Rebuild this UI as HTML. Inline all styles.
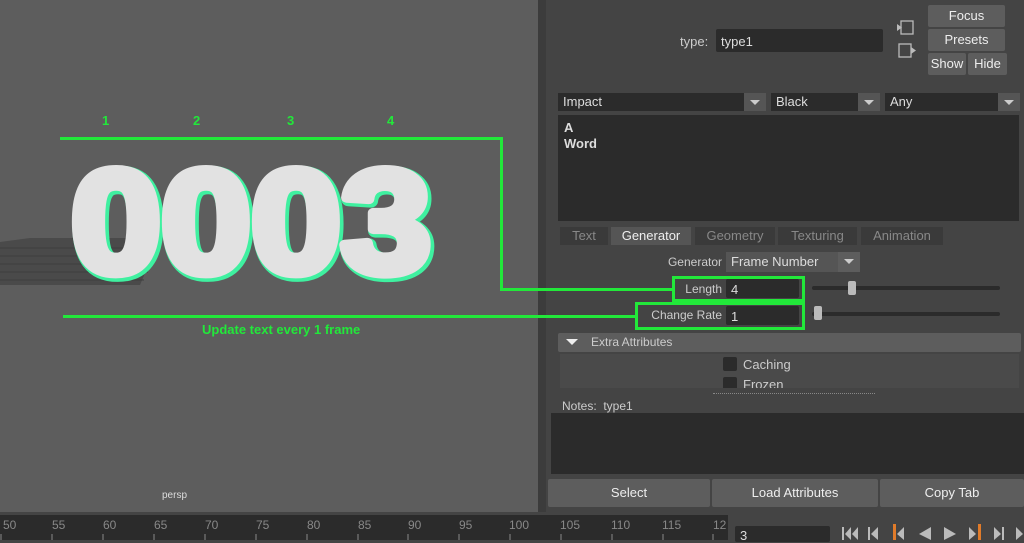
<!DOCTYPE html>
<html><head><meta charset="utf-8"><style>
*{margin:0;padding:0;box-sizing:border-box}
body{width:1024px;height:540px;overflow:hidden;background:#444;font-family:"Liberation Sans",sans-serif;font-size:12px;color:#ccc;position:relative}
.a{position:absolute}
.g{color:#22e83a;font-weight:bold;font-size:13px}
.gl{background:#22e83a}
.fld{background:#2b2b2b;border-radius:2px;color:#ddd}
.btn{background:#5d5d5d;color:#eee;text-align:center;border-radius:2px}
.dd{background:#2b2b2b;color:#ddd;padding-left:5px;line-height:18px}
.dd i{position:absolute;right:0;top:0;width:22px;height:18px;background:#555}
.dd i:after{content:"";position:absolute;left:6px;top:7px;border-left:5px solid transparent;border-right:5px solid transparent;border-top:5px solid #ccc}
.tab{background:#3a3a3a;color:#888;text-align:center;line-height:18px;font-size:13px;top:227px;height:18px}
</style></head><body>
<div class="a" style="left:0;top:0;width:538px;height:512px;background:#5d5d5d"></div>
<div class="a" style="left:538px;top:0;width:8px;height:512px;background:#3c3c3c"></div>
<svg class="a" style="left:0;top:230px" width="170" height="60"><polygon points="0,12 30,8 160,8 140,55 0,55" fill="#4a4a4a"/><g stroke="#3e3e3e" stroke-width="1"><line x1="0" y1="18" x2="158" y2="18"/><line x1="0" y1="26" x2="155" y2="26"/><line x1="0" y1="34" x2="151" y2="34"/><line x1="0" y1="42" x2="148" y2="42"/><line x1="0" y1="50" x2="144" y2="50"/></g></svg>
<svg class="a" style="left:0;top:0" width="538" height="512">
<text x="71" y="272" font-family="Liberation Sans" font-weight="bold" font-size="146" textLength="360" lengthAdjust="spacingAndGlyphs" fill="#3ff0a0" stroke="#3ff0a0" stroke-width="13" stroke-linejoin="round" transform="translate(2,2)">0003</text>
<text x="71" y="272" font-family="Liberation Sans" font-weight="bold" font-size="146" textLength="360" lengthAdjust="spacingAndGlyphs" fill="#e2e2e2" stroke="#e2e2e2" stroke-width="10" stroke-linejoin="round">0003</text>
</svg>
<div class="a g" style="left:102px;top:113px">1</div>
<div class="a g" style="left:193px;top:113px">2</div>
<div class="a g" style="left:287px;top:113px">3</div>
<div class="a g" style="left:387px;top:113px">4</div>
<div class="a gl" style="left:60px;top:137px;width:442px;height:3px"></div>
<div class="a gl" style="left:500px;top:137px;width:3px;height:153px"></div>
<div class="a gl" style="left:500px;top:288px;width:172px;height:3px"></div>
<div class="a gl" style="left:63px;top:315px;width:574px;height:3px"></div>
<div class="a g" style="left:202px;top:322px">Update text every 1 frame</div>
<div class="a" style="left:162px;top:490px;font-size:10px;color:#ddd">persp</div>
<div class="a" style="left:680px;top:34px;font-size:13px">type:</div>
<div class="a fld" style="left:716px;top:29px;width:167px;height:23px;padding:5px 5px;font-size:13px">type1</div>
<svg class="a" style="left:896px;top:18px" width="22" height="42"><rect x="5" y="3" width="12" height="13" fill="none" stroke="#bbb" stroke-width="1.3"/><polygon points="1,6 6,9.5 1,13" fill="#bbb"/><rect x="3" y="26" width="12" height="13" fill="none" stroke="#bbb" stroke-width="1.3"/><polygon points="15,29 20,32.5 15,36" fill="#bbb"/></svg>
<div class="a btn" style="left:928px;top:5px;width:77px;height:22px;line-height:22px;font-size:13px">Focus</div>
<div class="a btn" style="left:928px;top:29px;width:77px;height:22px;line-height:22px;font-size:13px">Presets</div>
<div class="a btn" style="left:928px;top:53px;width:38px;height:22px;line-height:22px;font-size:13px">Show</div>
<div class="a btn" style="left:968px;top:53px;width:39px;height:22px;line-height:22px;font-size:13px">Hide</div>
<div class="a dd" style="left:558px;top:93px;width:208px;height:18px;font-size:13px">Impact<i></i></div>
<div class="a dd" style="left:771px;top:93px;width:109px;height:18px;font-size:13px">Black<i></i></div>
<div class="a dd" style="left:885px;top:93px;width:135px;height:18px;font-size:13px">Any<i></i></div>
<div class="a" style="left:558px;top:115px;width:461px;height:106px;background:#2b2b2b;padding:5px 6px;font-weight:bold;color:#ddd;font-size:13px;line-height:16px">A<br>Word</div>
<div class="a" style="left:558px;top:226px;width:461px;height:20px;background:#444"></div>
<div class="a tab" style="left:560px;width:48px">Text</div>
<div class="a tab" style="left:611px;width:80px;background:#555;color:#eee">Generator</div>
<div class="a tab" style="left:695px;width:80px">Geometry</div>
<div class="a tab" style="left:778px;width:79px">Texturing</div>
<div class="a tab" style="left:861px;width:82px">Animation</div>
<div class="a" style="left:604px;width:118px;text-align:right;top:255px;font-size:12px">Generator</div>
<div class="a dd" style="left:726px;top:252px;width:134px;height:20px;background:#555;line-height:20px;font-size:13px">Frame Number<i style="height:20px;background:#5d5d5d"></i></div>
<div class="a" style="left:672px;top:276px;width:133px;height:26px;border:3px solid #22e83a"></div>
<div class="a" style="left:604px;width:118px;text-align:right;top:282px;font-size:12px">Length</div>
<div class="a fld" style="left:726px;top:279px;width:73px;height:19px;padding:3px 5px;font-size:13px">4</div>
<div class="a" style="left:635px;top:302px;width:170px;height:28px;border:3px solid #22e83a"></div>
<div class="a" style="left:604px;width:118px;text-align:right;top:308px;font-size:12px">Change Rate</div>
<div class="a fld" style="left:726px;top:306px;width:73px;height:19px;padding:3px 5px;font-size:13px">1</div>
<div class="a" style="left:812px;top:286px;width:188px;height:4px;background:#2b2b2b;border-radius:2px"></div>
<div class="a" style="left:848px;top:281px;width:8px;height:14px;background:#bbb;border-radius:2px"></div>
<div class="a" style="left:812px;top:312px;width:188px;height:4px;background:#2b2b2b;border-radius:2px"></div>
<div class="a" style="left:814px;top:306px;width:8px;height:14px;background:#bbb;border-radius:2px"></div>
<div class="a" style="left:558px;top:333px;width:463px;height:19px;background:#5d5d5d;border-radius:2px;line-height:19px;padding-left:33px;font-size:12px">Extra Attributes</div>
<div class="a" style="left:566px;top:339px;border-left:6px solid transparent;border-right:6px solid transparent;border-top:6px solid #eee"></div>
<div class="a" style="left:560px;top:354px;width:459px;height:34px;background:#4a4a4a;overflow:hidden">
<div class="a" style="left:163px;top:3px;width:14px;height:14px;background:#2b2b2b;border-radius:2px"></div>
<div class="a" style="left:183px;top:3px;font-size:13px">Caching</div>
<div class="a" style="left:163px;top:23px;width:14px;height:14px;background:#2b2b2b;border-radius:2px"></div>
<div class="a" style="left:183px;top:23px;font-size:13px">Frozen</div></div>
<div class="a" style="left:713px;top:393px;width:162px;border-top:1px dotted #888"></div>
<div class="a" style="left:562px;top:399px;font-size:12px">Notes:&nbsp; type1</div>
<div class="a" style="left:551px;top:413px;width:473px;height:61px;background:#2b2b2b"></div>
<div class="a btn" style="left:548px;top:479px;width:162px;height:28px;line-height:28px;font-size:13px">Select</div>
<div class="a btn" style="left:712px;top:479px;width:166px;height:28px;line-height:28px;font-size:13px">Load Attributes</div>
<div class="a btn" style="left:880px;top:479px;width:144px;height:28px;line-height:28px;font-size:13px">Copy Tab</div>
<div class="a" style="left:0;top:512px;width:1024px;height:28px;background:#444"></div>
<div class="a" style="left:0;top:515px;width:728px;height:25px;background:#2b2b2b"></div>
<div class="a" style="left:0;top:516px;width:728px;height:24px;font-size:12px;color:#888">
<span class="a" style="left:3px;top:2px">50</span><span class="a" style="left:52px;top:2px">55</span><span class="a" style="left:103px;top:2px">60</span><span class="a" style="left:154px;top:2px">65</span><span class="a" style="left:205px;top:2px">70</span><span class="a" style="left:256px;top:2px">75</span><span class="a" style="left:307px;top:2px">80</span><span class="a" style="left:358px;top:2px">85</span><span class="a" style="left:408px;top:2px">90</span><span class="a" style="left:459px;top:2px">95</span><span class="a" style="left:509px;top:2px">100</span><span class="a" style="left:560px;top:2px">105</span><span class="a" style="left:611px;top:2px">110</span><span class="a" style="left:662px;top:2px">115</span><span class="a" style="left:713px;top:2px">12</span>
<svg class="a" style="left:0;top:18px" width="728" height="6"><g stroke="#888"><line x1="1" y1="0" x2="1" y2="6"/><line x1="52" y1="0" x2="52" y2="6"/><line x1="103" y1="0" x2="103" y2="6"/><line x1="154" y1="0" x2="154" y2="6"/><line x1="205" y1="0" x2="205" y2="6"/><line x1="256" y1="0" x2="256" y2="6"/><line x1="307" y1="0" x2="307" y2="6"/><line x1="358" y1="0" x2="358" y2="6"/><line x1="408" y1="0" x2="408" y2="6"/><line x1="459" y1="0" x2="459" y2="6"/><line x1="510" y1="0" x2="510" y2="6"/><line x1="561" y1="0" x2="561" y2="6"/><line x1="612" y1="0" x2="612" y2="6"/><line x1="663" y1="0" x2="663" y2="6"/><line x1="713" y1="0" x2="713" y2="6"/></g></svg></div>
<div class="a fld" style="left:735px;top:526px;width:95px;height:16px;padding:2px 5px;font-size:13px">3</div>
<svg class="a" style="left:838px;top:523px" width="186" height="17"><g fill="#bbb">
<rect x="4" y="4" width="2" height="13"/><polygon points="13,4 7,11 13,17"/><polygon points="20,4 14,11 20,17"/>
<rect x="30" y="4" width="2" height="13"/><polygon points="40,4 33,11 40,17"/>
<rect x="55" y="1" width="3" height="16" fill="#e07b2a"/><polygon points="66,4 59,11 66,17"/>
<polygon points="93,4 81,11 93,17"/>
<polygon points="106,4 118,11 106,17"/>
<polygon points="131,4 138,11 131,17"/><rect x="140" y="1" width="3" height="16" fill="#e07b2a"/>
<polygon points="156,4 163,11 156,17"/><rect x="164" y="4" width="2" height="13"/>
<polygon points="178,4 185,11 178,17"/></g></svg>
</body></html>
